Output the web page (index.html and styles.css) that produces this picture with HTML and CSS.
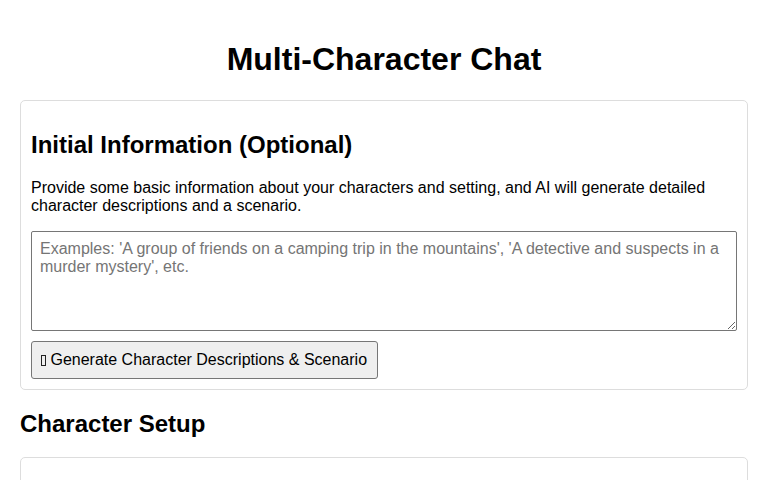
FILE: index.html
```html
<!DOCTYPE html>
<html>
<head>
<meta charset="utf-8">
<link rel="stylesheet" href="styles.css">
</head>
<body>
<h1 class="title">Multi-Character Chat</h1>
<section class="panel">
  <h2 class="section-title">Initial Information (Optional)</h2>
  <p class="intro">Provide some basic information about your characters and setting, and AI will generate detailed character descriptions and a scenario.</p>
  <textarea class="info-input" placeholder="Examples: 'A group of friends on a camping trip in the mountains', 'A detective and suspects in a murder mystery', etc."></textarea>
  <button class="btn"><span class="tofu"></span> Generate Character Descriptions &amp; Scenario</button>
</section>
<h2 class="section-title">Character Setup</h2>
<section class="panel">
  <p class="intro">&nbsp;</p>
</section>
</body>
</html>
```
FILE: styles.css
```css
html, body {
  margin: 0;
}
body {
  padding: 20px;
  font-family: "Liberation Sans", Arial, sans-serif;
  font-size: 16px;
  color: #000;
  background: #fff;
}
.title {
  text-align: center;
  font-size: 32px;
  margin: 21.44px 0;
}
.panel {
  border: 1px solid #ddd;
  border-radius: 5px;
  padding: 10px;
  margin-bottom: 20px;
}
.section-title {
  font-size: 24px;
  margin: 19.92px 0;
}
.intro {
  margin: 16px 0 15px;
  line-height: 18.4px;
}
.info-input {
  display: block;
  box-sizing: border-box;
  width: 100%;
  height: 100px;
  padding: 8px;
  font-family: "Liberation Sans", Arial, sans-serif;
  font-size: 16px;
  line-height: 18px;
  border: 1px solid #767676;
  border-radius: 2px;
  margin: 0;
}
.info-input::placeholder {
  color: #757575;
}
.btn {
  margin-top: 10px;
  padding: 9px 10px 9px 9px;
  font-family: "Liberation Sans", Arial, sans-serif;
  font-size: 16px;
  line-height: 18px;
  background: #efefef;
  border: 1px solid #767676;
  border-radius: 3px;
  color: #000;
}
.tofu {
  display: inline-block;
  box-sizing: border-box;
  width: 5px;
  height: 11px;
  border: 1px solid #222;
  vertical-align: -1px;
}
```
